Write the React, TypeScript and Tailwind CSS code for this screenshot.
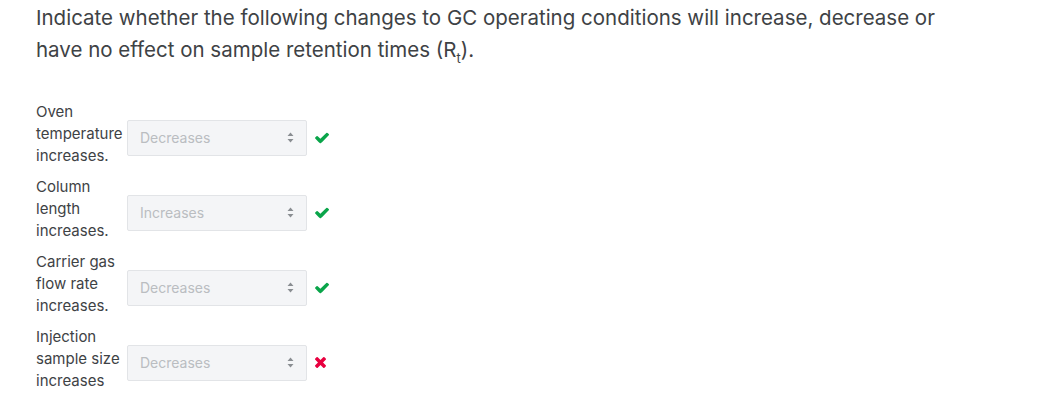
import React from "react";

const rows = [
  { label: ["Oven", "temperature", "increases."], value: "Decreases", ok: true },
  { label: ["Column", "length", "increases."], value: "Increases", ok: true },
  { label: ["Carrier gas", "flow rate", "increases."], value: "Decreases", ok: true },
  { label: ["Injection", "sample size", "increases"], value: "Decreases", ok: false },
];

function Check() {
  return (
    <svg width="14" height="12" viewBox="0 0 1550 1188" className="text-[#0aa54a]">
      <path
        fill="currentColor"
        d="M1550 232q0 40-28 68l-724 724-136 136q-28 28-68 28t-68-28l-136-136-362-362q-28-28-28-68t28-68l136-136q28-28 68-28t68 28l294 295 656-657q28-28 68-28t68 28l136 136q28 28 28 68z"
      />
    </svg>
  );
}

function Cross() {
  return (
    <svg width="11" height="11" viewBox="0 0 1188 1188" className="text-[#e8003f]">
      <path
        fill="currentColor"
        d="M1188 956q0 40-28 68l-136 136q-28 28-68 28t-68-28l-294-294-294 294q-28 28-68 28t-68-28l-136-136q-28-28-28-68t28-68l294-294-294-294q-28-28-28-68t28-68l136-136q28-28 68-28t68 28l294 294 294-294q28-28 68-28t68 28l136 136q28 28 28 68t-28 68l-294 294 294 294q28 28 28 68z"
      />
    </svg>
  );
}

function Arrows() {
  return (
    <svg width="7" height="11" viewBox="0 0 7 11" className="text-[#8a8e92]">
      <path fill="currentColor" d="M3.5 0.5 L6.5 4 H0.5 Z M3.5 10.5 L6.5 7 H0.5 Z" />
    </svg>
  );
}

export default function App() {
  return (
    <div className="w-[1047px] h-[410px] bg-white px-[36px] pt-[2px] text-[#373a3c] font-['Inter',sans-serif]">
      <p className="text-[20.5px] leading-[32px] text-[#3e4245]">
        Indicate whether the following changes to GC operating conditions will increase, decrease or
        <br />
        have no effect on sample retention times (R<sub className="text-[13px] align-[-3px] leading-none">t</sub>).
      </p>

      <div className="mt-[35px] flex flex-col gap-[9px]">
        {rows.map((r, i) => (
          <div key={i} className="flex items-center">
            <div className="w-[91px] text-[15px] leading-[22px] text-[#3e4245]">
              {r.label.map((l, j) => (
                <div key={j} className="whitespace-nowrap">{l}</div>
              ))}
            </div>
            <div className="mt-[7px] w-[180px] h-[36px] bg-[#f4f5f7] border border-[#e2e4e7] rounded-[2px] flex items-center justify-between pl-[12px] pr-[12px]">
              <span className="text-[14px] text-[#babdc1]">{r.value}</span>
              <Arrows />
            </div>
            <div className="mt-[7px] ml-[8px] flex items-center">{r.ok ? <Check /> : <Cross />}</div>
          </div>
        ))}
      </div>
    </div>
  );
}
